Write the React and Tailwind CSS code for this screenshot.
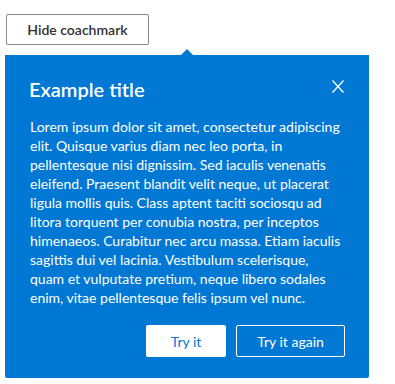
const body =
  'Lorem ipsum dolor sit amet, consectetur adipiscing elit. Quisque varius diam nec leo porta, in pellentesque nisi dignissim. Sed iaculis venenatis eleifend. Praesent blandit velit neque, ut placerat ligula mollis quis. Class aptent taciti sociosqu ad litora torquent per conubia nostra, per inceptos himenaeos. Curabitur nec arcu massa. Etiam iaculis sagittis dui vel lacinia. Vestibulum scelerisque, quam et vulputate pretium, neque libero sodales enim, vitae pellentesque felis ipsum vel nunc.';

export default function App() {
  return (
    <div className="min-h-[384px] bg-white font-['Lato',sans-serif] pl-[5px] pt-[14px]">
      <button className="ml-[1px] w-[143px] h-[31px] border border-[#8a8886] rounded-[2px] bg-white text-[14px] font-semibold text-[#323130]">
        Hide coachmark
      </button>

      {/* coachmark */}
      <div className="relative mt-[10px] w-[364px] bg-[#0078d4] rounded-b-[2px] px-[24px] pt-[20px] pb-[21px] text-white">
        <div className="absolute -top-[6px] left-[176px] w-0 h-0 border-x-[6px] border-x-transparent border-b-[6px] border-b-[#0078d4]" />

        <div className="flex items-start justify-between">
          <h2 className="text-[20px] leading-[28px] font-semibold">Example title</h2>
          <button className="mt-[5px] mr-[1px] text-white">
            <svg width="12" height="13" viewBox="0 0 12 13" fill="none" stroke="currentColor" strokeWidth="1.3">
              <path d="M0.5 0.5 L11.5 12.5 M11.5 0.5 L0.5 12.5" />
            </svg>
          </button>
        </div>

        <p className="mt-[14px] pl-[1px] text-[14px] leading-[19px]">{body}</p>

        <div className="mt-[18px] flex justify-end gap-[10px]">
          <button className="w-[80px] h-[32px] bg-white rounded-[2px] text-[14px] text-[#0078d4]">Try it</button>
          <button className="w-[109px] h-[32px] border border-white rounded-[2px] text-[14px] text-white">Try it again</button>
        </div>
      </div>
    </div>
  );
}
